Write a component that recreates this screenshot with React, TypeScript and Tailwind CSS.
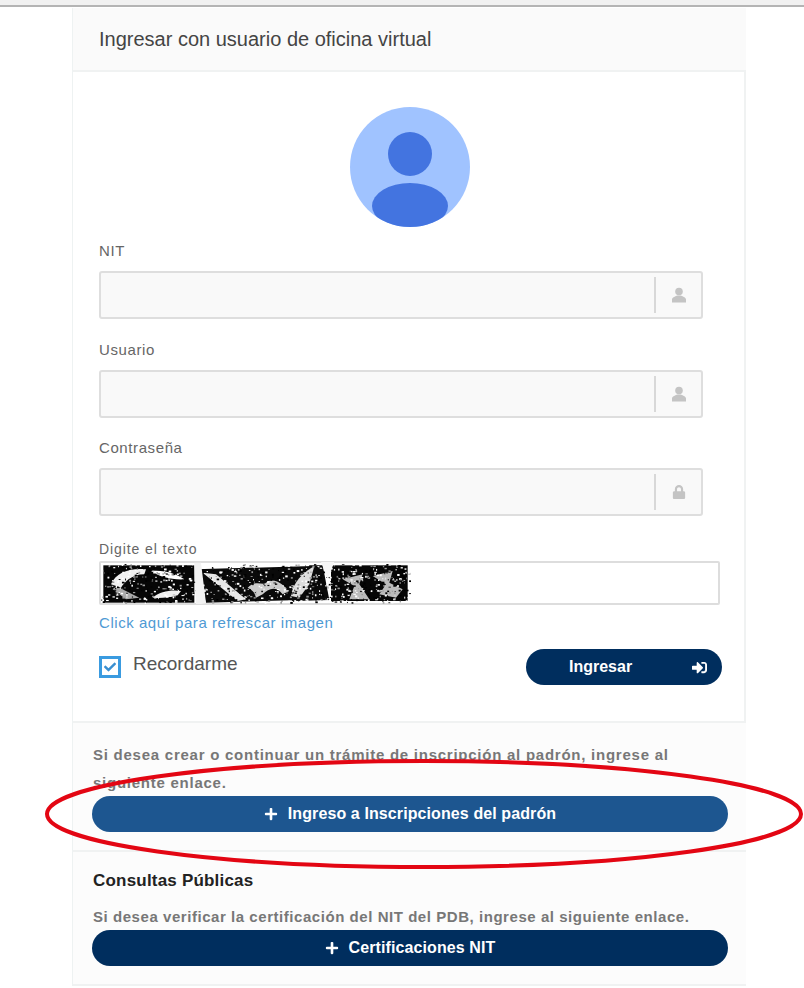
import { FaLock, FaSignInAlt, FaPlus, FaCheck } from 'react-icons/fa';

const font = { fontFamily: '"Liberation Sans", Arial, sans-serif' };

function seeded(n: number) {
  const out: number[] = [];
  let s = 7;
  for (let i = 0; i < n; i++) {
    s = (s * 16807) % 2147483647;
    out.push(s / 2147483647);
  }
  return out;
}

function Captcha() {
  const r = seeded(4000);
  const specks = [];
  for (let i = 0; i < 900; i++) {
    specks.push(
      <rect
        key={i}
        x={15 + r[i * 4] * 930}
        y={24 + r[i * 4 + 1] * 116}
        width={2 + r[i * 4 + 2] * 6}
        height={2 + r[i * 4 + 3] * 4}
        fill={i % 5 < 2 ? '#000' : i % 5 === 2 ? '#999' : '#fff'}
      />
    );
  }
  return (
    <svg width="310" height="42" viewBox="15 18 930 126" className="block shrink-0">
      <rect x="22" y="28" width="273" height="112" fill="#060606" />
      <path d="M300 40 L650 30 L700 130 L330 140 Z" fill="#0a0a0a" />
      <path d="M640 28 L680 28 L700 132 L600 135 Z" fill="#0a0a0a" />
      <rect x="705" y="28" width="230" height="107" fill="#060606" />
      <path d="M45 85 C60 50 100 35 150 40 L145 55 C105 55 85 80 75 95 Z" fill="#f0f0f0" />
      <path d="M165 45 C205 40 245 55 265 70 C225 72 190 62 165 45 Z" fill="#fff" />
      <path d="M170 125 C190 105 230 100 255 105 L245 118 C220 125 190 128 170 125 Z" fill="#eee" />
      <path d="M60 90 L130 125 L90 130 L50 100 Z" fill="#aaa" />
      <path d="M320 50 L360 55 L450 130 L425 135 Z" fill="#e8e8e8" />
      <path d="M455 95 C480 70 500 90 510 80 C535 60 565 90 580 105 L560 115 C540 90 520 95 500 115 L480 125 C475 105 465 100 455 95 Z" fill="#ccc" />
      <path d="M585 120 C590 80 620 50 655 30 L640 85 L610 125 Z" fill="#ddd" />
      <path d="M740 70 L800 55 L790 85 L820 130 L760 130 L775 90 Z" fill="#bbb" />
      <path d="M830 60 L890 45 L880 80 L920 100 L900 125 L850 115 L870 85 Z" fill="#bbb" />
      {specks}
      <path d="M295 20 L315 20 L330 142 L300 146 Z" fill="#f2f2f2" />
      <path d="M675 18 L715 18 L695 70 Z" fill="#f6f6f6" />
    </svg>
  );
}

function UserGlyph() {
  return (
    <svg width="16" height="16" viewBox="0 0 16 16" fill="currentColor">
      <circle cx="8" cy="4.5" r="3.8" />
      <path d="M1 15.5 V12.5 C1 10.5 4 9.5 6 8.5 H10 C12 9.5 15 10.5 15 12.5 V15.5 Z" />
    </svg>
  );
}

function Field({ label, icon, gap }: { label: string; icon: React.ReactNode; gap: string }) {
  return (
    <div className={gap}>
      <p className="text-[15px] leading-[20px] text-[#666] tracking-[0.6px]">{label}</p>
      <div className="mt-[10px] flex h-[48px] w-[604px] items-center rounded-[3px] border-2 border-[#dedede] bg-[#f9f9f9]">
        <div className="flex-1" />
        <div className="h-[36px] w-[2px] bg-[#d8d8d8]" />
        <div className="flex w-[45px] justify-center text-[#c4c4c4] text-[16px]">{icon}</div>
      </div>
    </div>
  );
}

function PillButton({ className, label }: { className: string; label: string }) {
  return (
    <button className={`flex h-[36px] w-[636px] items-center justify-center gap-[10px] rounded-full text-[16px] font-bold tracking-[0.1px] text-white ${className}`}>
      <FaPlus className="text-[14px]" />
      {label}
    </button>
  );
}

export default function App() {
  return (
    <div className="relative h-[988px] w-[804px] overflow-hidden bg-white" style={font}>
      <div className="h-[7px] border-b-2 border-[#b4b4b4] bg-[#f1f1f1]" />

      <div className="ml-[72px] mt-px w-[674px] border-l border-[#eef2f2]">
        <div className="flex h-[62px] items-center bg-[#fafafa] pl-[26px] text-[20px] text-[#444]">
          Ingresar con usuario de oficina virtual
        </div>

        <div className="h-[653px] border-2 border-l-0 border-[#f0f2f2] bg-white pl-[26px] pt-[35px]">
          <div className="flex w-[622px] justify-center">
            <svg width="120" height="120" viewBox="0 0 120 120">
              <defs>
                <clipPath id="avatar">
                  <circle cx="60" cy="60" r="60" />
                </clipPath>
              </defs>
              <circle cx="60" cy="60" r="60" fill="#a0c3ff" />
              <circle cx="60" cy="47" r="22" fill="#4374e0" />
              <ellipse cx="60" cy="99" rx="38" ry="23" fill="#4374e0" clipPath="url(#avatar)" />
            </svg>
          </div>

          <Field label="NIT" icon={<UserGlyph />} gap="mt-[14px]" />
          <Field label="Usuario" icon={<UserGlyph />} gap="mt-[21px]" />
          <Field label="Contraseña" icon={<FaLock className="text-[14px]" />} gap="mt-[20px]" />

          <p className="mt-[23px] text-[14px] leading-[20px] text-[#666] tracking-[0.9px]">Digite el texto</p>
          <div className="mt-[2px] flex h-[44px] w-[621px] items-center rounded-[2px] border-2 border-[#ddd] bg-white">
            <Captcha />
          </div>
          <p className="mt-[8px] text-[15px] leading-[20px] text-[#4f9ad4] tracking-[0.55px]">Click aquí para refrescar imagen</p>

          <div className="mt-[16px] flex w-[623px] items-center justify-between">
            <div className="flex items-center">
              <span className="flex h-[22px] w-[22px] items-center justify-center border-[3px] border-[#3a9be0] text-[12px] text-[#3a8fd0]">
                <FaCheck />
              </span>
              <span className="ml-[12px] -mt-[5px] text-[19px] text-[#555]">Recordarme</span>
            </div>
            <button className="flex h-[36px] w-[196px] items-center rounded-full bg-[#002e5e] pl-[43px] pr-[15px] text-[16px] font-bold text-white">
              <span className="flex-1 text-left">Ingresar</span>
              <FaSignInAlt className="text-[15px]" />
            </button>
          </div>
        </div>

        <div className="h-[129px] border-b-2 border-[#f0f2f2] bg-[#fcfcfc] pl-[19px] pt-[18px]">
          <p className="w-[600px] pl-px text-[15px] font-bold leading-[28px] text-[#777] tracking-[0.75px]">
            Si desea crear o continuar un trámite de inscripción al padrón, ingrese al siguiente enlace.
          </p>
          <PillButton className="-mt-[1px] bg-[#1d5690]" label="Ingreso a Inscripciones del padrón" />
        </div>

        <div className="h-[134px] border-b-2 border-[#f0f2f2] bg-[#fcfcfc] pl-[19px] pt-[19px]">
          <p className="pl-px text-[17px] font-bold leading-[20px] text-[#222] tracking-[0.2px]">Consultas Públicas</p>
          <p className="mt-[16px] pl-px text-[15px] font-bold leading-[20px] text-[#777] tracking-[0.55px]">
            Si desea verificar la certificación del NIT del PDB, ingrese al siguiente enlace.
          </p>
          <PillButton className="mt-[3px] bg-[#002e5e]" label="Certificaciones NIT" />
        </div>
      </div>

      <svg className="pointer-events-none absolute left-0 top-0" width="804" height="988" viewBox="0 0 804 988">
        <ellipse cx="424" cy="814" rx="377" ry="53" fill="none" stroke="#e30613" strokeWidth="4" />
      </svg>
    </div>
  );
}
